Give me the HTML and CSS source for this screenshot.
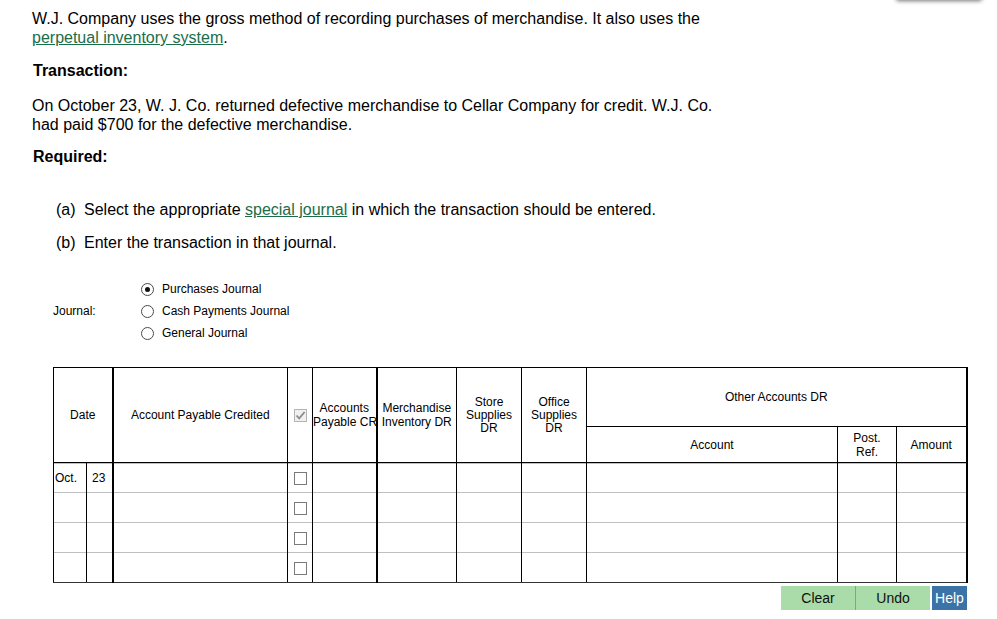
FILE: index.html
```html
<!DOCTYPE html>
<html lang="en">
<head>
<meta charset="utf-8">
<title>Purchases Journal</title>
<link rel="stylesheet" href="styles.css">
</head>
<body>
<div class="topshadow"></div>
<div class="page">
  <p class="intro">W.J. Company uses the gross method of recording purchases of merchandise. It also uses the <a class="term">perpetual inventory system</a>.</p>
  <h3 class="head">Transaction:</h3>
  <p class="txn">On October 23, W. J. Co. returned defective merchandise to Cellar Company for credit. W.J. Co. had paid $700 for the defective merchandise.</p>
  <h3 class="head head-req">Required:</h3>
  <ol class="steps">
    <li><span class="step-label">(a)</span><span>Select the appropriate <a class="term">special journal</a> in which the transaction should be entered.</span></li>
    <li><span class="step-label">(b)</span><span>Enter the transaction in that journal.</span></li>
  </ol>

  <div class="journal">
    <div class="journal-label">Journal:</div>
    <div class="radios">
      <div class="radio-row"><span class="radio checked"></span>Purchases Journal</div>
      <div class="radio-row"><span class="radio"></span>Cash Payments Journal</div>
      <div class="radio-row"><span class="radio"></span>General Journal</div>
    </div>
  </div>

  <table class="ledger">
    <colgroup>
      <col class="c-mon"><col class="c-day"><col class="c-apc"><col class="c-chk"><col class="c-apcr">
      <col class="c-mi"><col class="c-ss"><col class="c-os"><col class="c-acct"><col class="c-pr"><col class="c-amt">
    </colgroup>
    <thead>
      <tr class="r1">
        <th colspan="2" rowspan="2" class="thick-r">Date</th>
        <th rowspan="2">Account Payable Credited</th>
        <th rowspan="2"><span class="hdr-check"><svg width="11" height="11" viewBox="0 0 11 11"><path d="M1.5 5.5 L4.2 8.3 L9.6 2" fill="none" stroke="#8c8c8c" stroke-width="1.8"/></svg></span></th>
        <th rowspan="2" class="thick-r nowrap">Accounts<br>Payable CR</th>
        <th rowspan="2" class="nowrap">Merchandise<br>Inventory DR</th>
        <th rowspan="2" class="tight">Store<br>Supplies<br>DR</th>
        <th rowspan="2" class="tight">Office<br>Supplies<br>DR</th>
        <th colspan="3" class="thick-r">Other Accounts DR</th>
      </tr>
      <tr class="r2">
        <th>Account</th>
        <th>Post.<br>Ref.</th>
        <th class="thick-r">Amount</th>
      </tr>
    </thead>
    <tbody>
      <tr class="first">
        <td class="mon">Oct.</td><td class="day thick-r">23</td><td></td><td class="chk"><span class="box"></span></td><td class="thick-r"></td>
        <td></td><td></td><td></td><td></td><td></td><td class="thick-r"></td>
      </tr>
      <tr>
        <td class="mon"></td><td class="day thick-r"></td><td></td><td class="chk"><span class="box"></span></td><td class="thick-r"></td>
        <td></td><td></td><td></td><td></td><td></td><td class="thick-r"></td>
      </tr>
      <tr>
        <td class="mon"></td><td class="day thick-r"></td><td></td><td class="chk"><span class="box"></span></td><td class="thick-r"></td>
        <td></td><td></td><td></td><td></td><td></td><td class="thick-r"></td>
      </tr>
      <tr>
        <td class="mon"></td><td class="day thick-r"></td><td></td><td class="chk"><span class="box"></span></td><td class="thick-r"></td>
        <td></td><td></td><td></td><td></td><td></td><td class="thick-r"></td>
      </tr>
    </tbody>
  </table>

  <div class="actions">
    <button class="btn btn-green btn-clear">Clear</button>
    <button class="btn btn-green btn-undo">Undo</button>
    <button class="btn btn-help">Help</button>
  </div>
</div>
</body>
</html>
```
FILE: styles.css
```css
* { box-sizing: border-box; }
html, body { margin: 0; padding: 0; background: #fff; }
body {
  font-family: "Liberation Sans", Arial, sans-serif;
  color: #000;
  font-size: 16px;
  line-height: 19px;
}

.topshadow {
  position: absolute;
  top: -20px;
  left: 896px;
  width: 86px;
  height: 20px;
  background: #fff;
  border-radius: 3px;
  box-shadow: 0 1px 4px rgba(0, 0, 0, 0.55);
}

.page { padding: 9px 0 0 32px; }

.intro, .txn { margin: 0; width: 700px; }
.txn { margin-top: 16px; }

.term { color: #1b6d48; text-decoration: underline; }

.head {
  margin: 14px 0 0 1px;
  font-size: 16px;
  line-height: 19px;
  font-weight: bold;
}
.head-req { margin-top: 13px; }

.steps { list-style: none; margin: 34px 0 0 24px; padding: 0; }
.steps li { display: flex; }
.steps li + li { margin-top: 14px; }
.step-label { width: 28px; flex: none; }

.journal {
  display: flex;
  align-items: center;
  margin: 26px 0 0 21px;
  font-size: 12px;
  line-height: 14px;
}
.journal-label { width: 88px; }
.radio-row { display: flex; align-items: center; height: 22px; }
.radio {
  width: 13px;
  height: 13px;
  border: 1px solid #4a4a4a;
  border-radius: 50%;
  margin-right: 8px;
  display: flex;
  align-items: center;
  justify-content: center;
  background: #fff;
}
.radio.checked::after {
  content: "";
  width: 5px;
  height: 5px;
  border-radius: 50%;
  background: #111;
}

.ledger {
  margin: 23px 0 0 21px;
  border-collapse: collapse;
  table-layout: fixed;
  width: 913px;
  font-size: 12px;
  line-height: 14px;
}
.c-mon { width: 33px; }
.c-day { width: 26px; }
.c-apc { width: 175px; }
.c-chk { width: 25px; }
.c-apcr { width: 64px; }
.c-mi { width: 80px; }
.c-ss { width: 65px; }
.c-os { width: 65px; }
.c-acct { width: 251px; }
.c-pr { width: 59px; }
.c-amt { width: 70px; }

.ledger th {
  font-weight: normal;
  border: 1px solid #000;
  text-align: center;
  vertical-align: middle;
  padding: 0;
}
.ledger .r1 th { height: 59px; }
.ledger .r2 th { height: 36px; }
.ledger th.nowrap { white-space: nowrap; overflow: visible; }
.ledger th.tight { line-height: 13px; }

.ledger td {
  border-left: 1px solid #000;
  border-right: 1px solid #000;
  border-top: 1px solid #c0c0c0;
  height: 30px;
  padding: 0;
  vertical-align: middle;
}
.ledger tbody tr.first td { box-shadow: inset 0 1px 0 #c0c0c0; }
.ledger tbody tr:last-child td { border-bottom: 1px solid #333; }
.ledger .thick-r { border-right-width: 2px; }

.ledger td.mon { padding-left: 1px; }
.ledger td.day { padding-left: 5px; }
.ledger td.chk { text-align: center; }

.hdr-check {
  display: inline-flex;
  align-items: center;
  justify-content: center;
  width: 13px;
  height: 13px;
  border: 1px solid #b4b4b4;
  background: #f0f0f0;
  vertical-align: middle;
}
.box {
  display: inline-block;
  width: 13px;
  height: 13px;
  border: 1px solid #7a7a7a;
  background: #fff;
  vertical-align: middle;
}

.actions {
  display: flex;
  justify-content: flex-end;
  width: 914px;
  margin: 3px 0 0 21px;
}
.btn {
  font-family: "Liberation Sans", Arial, sans-serif;
  font-size: 14px;
  height: 24px;
  border: none;
  padding: 0;
  cursor: pointer;
}
.btn-green { background: #a9dca9; color: #111; }
.btn-clear { width: 75px; border-right: 1px solid #8e9e8e; }
.btn-undo { width: 74px; }
.btn-help {
  width: 35px;
  margin-left: 2px;
  background: #3b73a7;
  color: #fff;
}
```
